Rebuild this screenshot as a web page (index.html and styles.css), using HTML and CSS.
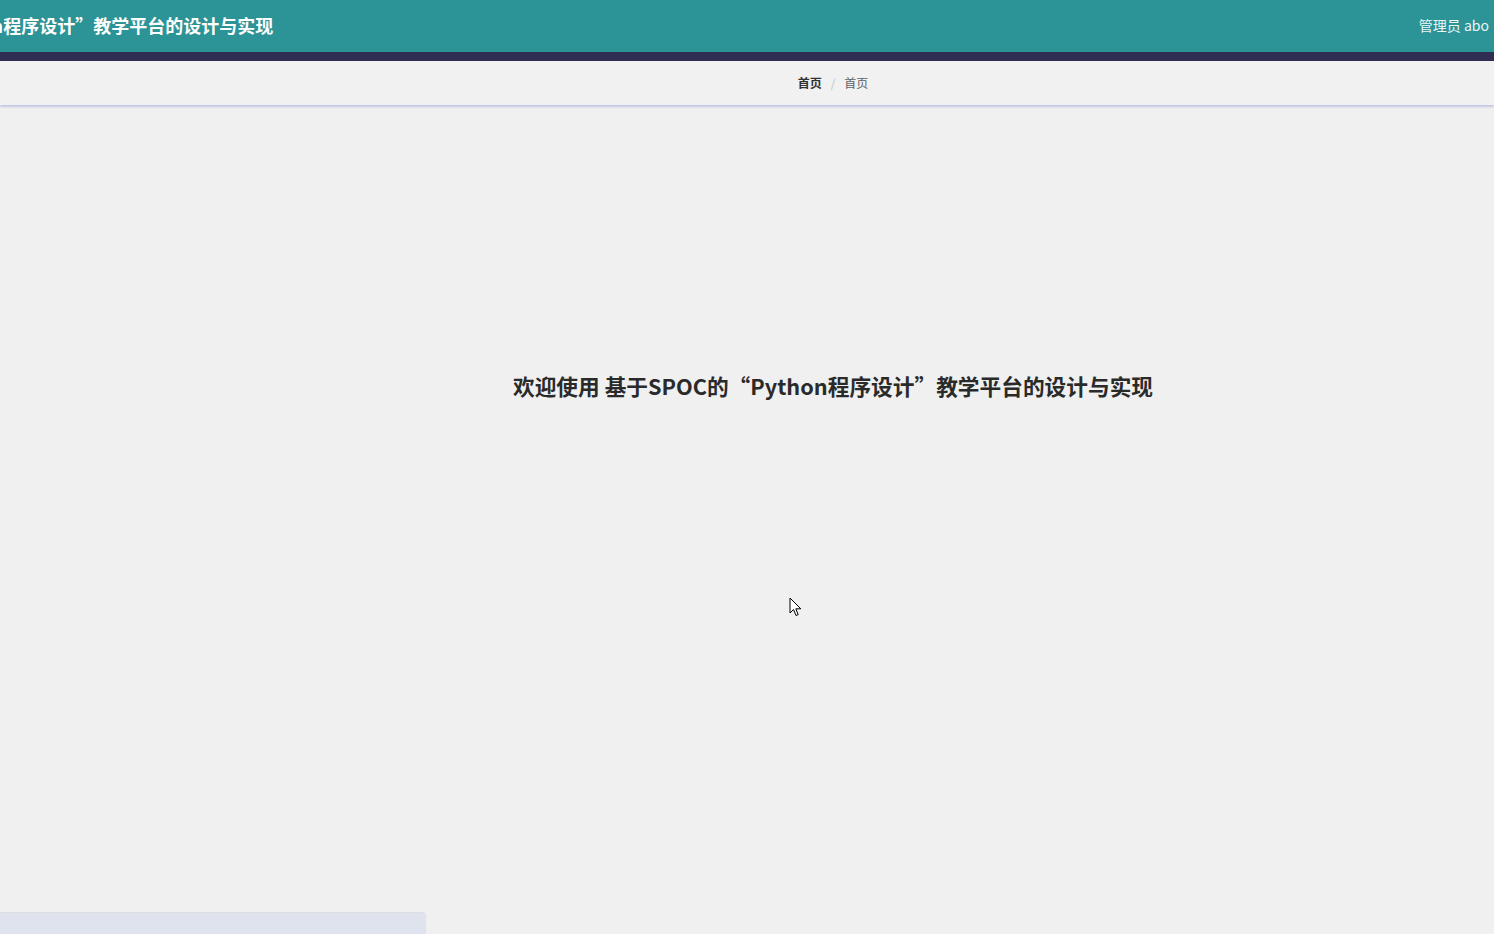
FILE: index.html
```html
<!DOCTYPE html>
<html lang="zh-CN">
<head>
  <meta charset="UTF-8">
  <meta name="viewport" content="width=device-width, initial-scale=1.0">
  <title>首页</title>
  <link rel="stylesheet" href="styles.css">
</head>
<body>
  <header class="topbar">
    <div class="brand">基于SPOC的“Python程序设计”教学平台的设计与实现</div>
    <div class="user">管理员 abo</div>
  </header>
  <div class="topline"></div>
  <main class="main">
    <nav class="crumbs">
      <span class="crumb-home">首页</span>
      <span class="crumb-sep">/</span>
      <span class="crumb-cur">首页</span>
    </nav>
    <section class="welcome">
      <h1>欢迎使用 基于SPOC的“Python程序设计”教学平台的设计与实现</h1>
    </section>
  </main>
  <div class="dock"></div>

  <svg class="pointer" width="13" height="20" viewBox="0 0 13 20">
    <path d="M1 1 L1 16 L4.5 12.5 L7 18.5 L9.2 17.6 L6.8 11.8 L11.8 11.8 Z" fill="#fff" stroke="#000" stroke-width="1" stroke-linejoin="round"/>
  </svg>
</body>
</html>
```

FILE: styles.css
```css
html, body {
  margin: 0;
  height: 100%;
}
body {
  font-family: "Noto Sans CJK SC", "Noto Sans", sans-serif;
  background-color: #eff0ef;
  color: #333;
  overflow: hidden;
  display: flex;
  flex-direction: column;
  position: relative;
}
.topbar {
  height: 52px;
  flex: none;
  background-color: #2c9396;
  display: flex;
  align-items: center;
  justify-content: space-between;
  overflow: hidden;
  white-space: nowrap;
}
.brand {
  margin-left: -182px;
  margin-top: -2px;
  font-size: 18px;
  font-weight: 700;
  color: #fff;
}
.user {
  margin-right: 5px;
  margin-top: -2px;
  font-size: 14px;
  color: #eaf6f6;
}
.topline {
  height: 9px;
  flex: none;
  background-color: #2f2d52;
}
.main {
  flex: 1;
  margin-left: 172px;
  display: flex;
  flex-direction: column;
}
.crumbs {
  height: 44px;
  margin-left: -172px;
  padding-left: 172px;
  flex: none;
  display: flex;
  align-items: center;
  justify-content: center;
  gap: 8px;
  font-size: 12px;
  background-color: #f0f1f0;
  box-shadow: 0 2px 2px #c5c8e6;
}
.crumbs span {
  margin-top: -2px;
}
.crumb-home {
  font-weight: 700;
  color: #303133;
}
.crumb-sep {
  color: #c0c4cc;
  margin: 0 1px;
}
.crumb-cur {
  color: #606266;
}
.welcome {
  flex: 1;
  display: flex;
  justify-content: center;
  padding-top: 266px;
}
.welcome h1 {
  margin: 0;
  font-size: 21.7px;
  font-weight: 700;
  color: #2a2a2a;
  line-height: 30px;
}
.dock {
  height: 21px;
  width: 426px;
  flex: none;
  background-color: #dfe3ee;
  border-top-right-radius: 4px;
  box-shadow: 0 -1px 0 #dcdee2;
}
.pointer {
  position: absolute;
  left: 789px;
  top: 597px;
}
```
